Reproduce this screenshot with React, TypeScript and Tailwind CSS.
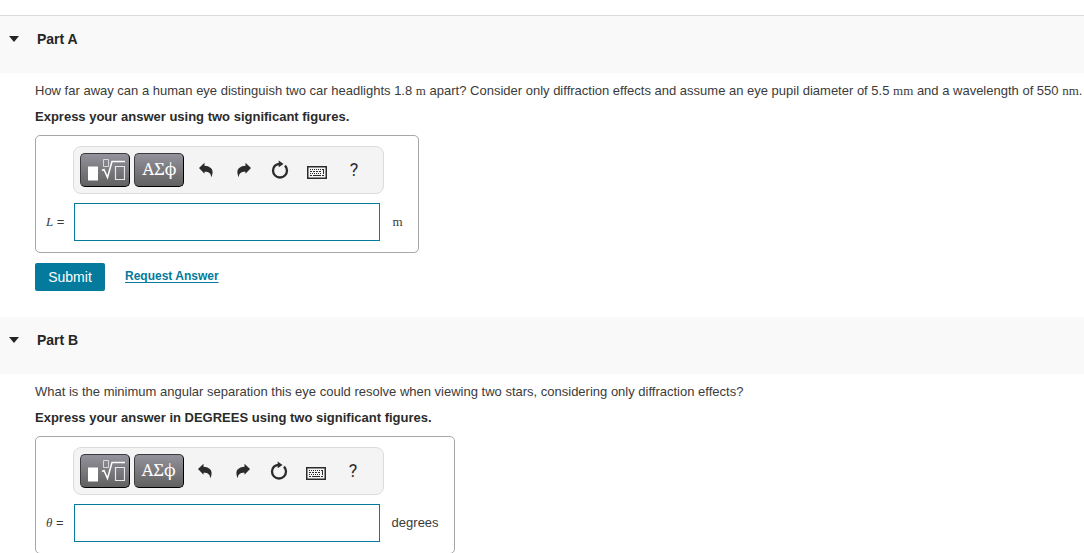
import { useState, type ReactNode } from "react";

const ICON_BTN = "w-[37px] h-[34px] flex items-center justify-center text-[#2b2b2b]";
const PALETTE_BTN =
  "w-[50px] h-[34px] flex items-center justify-center rounded-[5px] border border-[#3c3c40] border-r-black border-b-black bg-linear-to-b from-[#94929c] to-[#616161] text-white";

function Unit({ children }: { children: ReactNode }) {
  return <span className="font-['Liberation_Serif',serif]">{children}</span>;
}

function TemplatesIcon() {
  return (
    <svg className="w-[40px] h-[24px]" viewBox="0 0 40 24" fill="none" stroke="#fff">
      <path d="M3 8.5h10v14H3z" fill="#fff" stroke="none" />
      <path d="M18.5 1.5h5v7h-5z" stroke="#d8d8dc" />
      <path d="M17 12.5l2-1 3.5 8L27 3.5h13" strokeWidth="1.5" />
      <path d="M30.5 8.5h9v13h-9z" stroke="#e8e8ea" strokeWidth="1.2" />
    </svg>
  );
}

function UndoIcon() {
  return (
    <svg className="w-[16px] h-[16px]" viewBox="0 0 16 16" fill="currentColor">
      <path d="M1 6L6.5.8v3C11.5 4 14.6 6.600 14.600 10c0 2.200-.6 3.900-1.600 5.300.3-3.600-1.700-5.500-6.500-5.500v2z" />
    </svg>
  );
}

function RedoIcon() {
  return (
    <svg className="w-[16px] h-[16px] -scale-x-100" viewBox="0 0 16 16" fill="currentColor">
      <path d="M1 6L6.5.8v3C11.5 4 14.6 6.600 14.600 10c0 2.200-.6 3.900-1.600 5.300.3-3.600-1.700-5.500-6.500-5.500v2z" />
    </svg>
  );
}

function ResetIcon() {
  return (
    <svg className="w-[18px] h-[20px]" viewBox="0 0 18 20" fill="none">
      <path d="M14 5.600A7 7 0 1 1 4 5.600Q6 3.800 9 3.800" stroke="currentColor" strokeWidth="2.300" />
      <path d="M7.700.600l4.800 3.300-4.800 3.300z" fill="currentColor" />
    </svg>
  );
}

function KeyboardIcon() {
  return (
    <svg className="w-[20px] h-[13px] mt-1" viewBox="0 0 20 13" fill="none" stroke="currentColor">
      <path d="M.75.75h18.5v11.5H.75z" strokeWidth="1.5" />
      <path d="M3 3.5h14" strokeDasharray="1 1" />
      <path d="M3 5.5h11" strokeDasharray="2 1" />
      <path d="M3 7.5h12" strokeDasharray="1 1" />
      <path d="M3 9.5h2M6 9.5h8M15 9.5h2M16.5 3v5" />
    </svg>
  );
}

function Toolbar() {
  return (
    <div className="col-start-2 col-span-2 justify-self-start -ml-px w-[311px] h-[48px] flex items-center px-1.5 rounded-lg border border-[#dcdcdc] bg-[#f4f4f4]">
      <button className={PALETTE_BTN} aria-label="Templates"><TemplatesIcon /></button>
      <button className={`${PALETTE_BTN} ml-1 mr-[3px] pb-0.5 font-['Noto_Serif','Liberation_Serif',serif] text-[17px] leading-5`}>ΑΣϕ</button>
      <button className={ICON_BTN} aria-label="Undo"><UndoIcon /></button>
      <button className={`${ICON_BTN} pl-0.5`} aria-label="Redo"><RedoIcon /></button>
      <button className={ICON_BTN} aria-label="Reset"><ResetIcon /></button>
      <button className={ICON_BTN} aria-label="Keyboard shortcuts"><KeyboardIcon /></button>
      <button className={`${ICON_BTN} pb-0.5 font-['Roboto',sans-serif] text-[18px]`}>?</button>
    </div>
  );
}

interface AnswerProps { id: string; symbol: string; unit: ReactNode; }

function AnswerBox({ id, symbol, unit }: AnswerProps) {
  const [value, setValue] = useState("");
  return (
    <div className="w-fit grid grid-cols-[auto_306px_auto] items-center gap-y-[9px] pl-2.5 pr-[15px] pt-2.5 pb-[11px] rounded-[5px] border border-[#a6a6a6]">
      <Toolbar />
      <label htmlFor={id} className="pr-2.5">
        <i className="font-['Liberation_Serif',serif]">{symbol}</i> =
      </label>
      <input id={id} value={value} onChange={(e) => setValue(e.target.value)}
        className="w-full h-[38px] px-2 border border-[#047a9c] bg-white outline-none" />
      <span className="pl-3">{unit}</span>
    </div>
  );
}

interface PartProps { title: string; question: ReactNode; hint: string; children: ReactNode; }

function Part({ title, question, hint, children }: PartProps) {
  const [open, setOpen] = useState(true);
  return (
    <section>
      <h2 className="h-[57px] bg-[#f9f9f9] pt-3">
        <button onClick={() => setOpen(!open)} aria-expanded={open} className="flex items-center h-[22px] pl-[9px] text-[14px] font-bold text-[#252525]">
          <svg className="w-[10px] h-[6px] mr-[18px]" viewBox="0 0 10 6" fill="currentColor"><path d="M0 0h10L5 6z" /></svg>
          {title}
        </button>
      </h2>
      {open && (
        <div className="pl-[35px] pt-2">
          <p className="leading-5 whitespace-nowrap">{question}</p>
          <p className="mt-1.5 mb-2 leading-5 font-bold text-[#2b2b2b]">{hint}</p>
          {children}
        </div>
      )}
    </section>
  );
}

export default function App() {
  return (
    <main className="h-screen overflow-x-hidden overflow-y-auto [scrollbar-width:none] bg-white pt-[15px] font-['Liberation_Sans',sans-serif] text-[13px] text-[#3b3b3b]">
      <div className="border-t border-[#dcdcdc]">
        <Part title="Part A" hint="Express your answer using two significant figures."
          question={<>How far away can a human eye distinguish two car headlights 1.8 <Unit>m</Unit> apart? Consider only diffraction effects and assume an eye pupil diameter of 5.5 <Unit>mm</Unit> and a wavelength of 550 <Unit>nm</Unit>.</>}>
          <AnswerBox id="distance" symbol="L" unit={<Unit>m</Unit>} />
          <div className="flex items-center mt-2.5 mb-[26px]">
            <button className="w-[70px] h-[28px] rounded-xs bg-[#047a9c] text-[14px] text-white">Submit</button>
            <a href="#answer" className="ml-5 pb-0.5 text-[12px] font-bold text-[#047a9c] underline underline-offset-2">Request Answer</a>
          </div>
        </Part>
        <Part title="Part B" hint="Express your answer in DEGREES using two significant figures."
          question="What is the minimum angular separation this eye could resolve when viewing two stars, considering only diffraction effects?">
          <AnswerBox id="angle" symbol="θ" unit="degrees" />
        </Part>
      </div>
    </main>
  );
}
